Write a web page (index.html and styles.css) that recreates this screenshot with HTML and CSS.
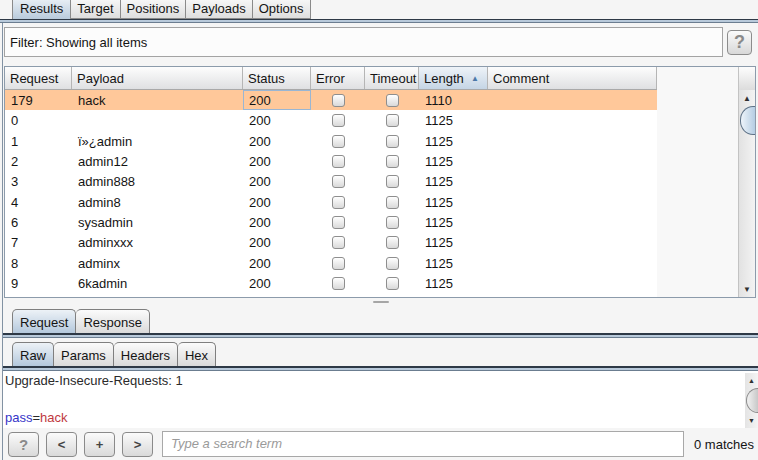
FILE: index.html
```html
<!doctype html>
<html lang="en">
 <head>
  <meta charset="UTF-8">
  <title>Intruder attack - Results</title>
  <link rel="stylesheet" href="styles.css">
 </head>
 <body>

	<!-- top tabs -->
	<div class="maintabs">
		<div class="tab sel">Results</div>
		<div class="tab">Target</div>
		<div class="tab">Positions</div>
		<div class="tab">Payloads</div>
		<div class="tab">Options</div>
	</div>
	<div class="tabline thin"></div>

	<div class="pane">

		<!-- filter -->
		<div class="filter-row">
			<div class="filter">Filter: Showing all items</div>
			<div class="help">?</div>
		</div>

		<!-- results table -->
		<div class="table">
			<div class="grid">
				<div class="thead">
					<div class="th c1">Request</div>
					<div class="th c2">Payload</div>
					<div class="th c3">Status</div>
					<div class="th c4">Error</div>
					<div class="th c5">Timeout</div>
					<div class="th c6 sorted">Length <span class="arrow">&#9650;</span></div>
					<div class="th c7">Comment</div>
				</div>
				<div class="tbody">
					<div class="tr sel"><div class="td c1">179</div><div class="td c2">hack</div><div class="td c3 focus">200</div><div class="td c4"><span class="cb"></span></div><div class="td c5"><span class="cb"></span></div><div class="td c6">1110</div><div class="td c7"></div></div>
					<div class="tr"><div class="td c1">0</div><div class="td c2"></div><div class="td c3">200</div><div class="td c4"><span class="cb"></span></div><div class="td c5"><span class="cb"></span></div><div class="td c6">1125</div><div class="td c7"></div></div>
					<div class="tr"><div class="td c1">1</div><div class="td c2">ï»¿admin</div><div class="td c3">200</div><div class="td c4"><span class="cb"></span></div><div class="td c5"><span class="cb"></span></div><div class="td c6">1125</div><div class="td c7"></div></div>
					<div class="tr"><div class="td c1">2</div><div class="td c2">admin12</div><div class="td c3">200</div><div class="td c4"><span class="cb"></span></div><div class="td c5"><span class="cb"></span></div><div class="td c6">1125</div><div class="td c7"></div></div>
					<div class="tr"><div class="td c1">3</div><div class="td c2">admin888</div><div class="td c3">200</div><div class="td c4"><span class="cb"></span></div><div class="td c5"><span class="cb"></span></div><div class="td c6">1125</div><div class="td c7"></div></div>
					<div class="tr"><div class="td c1">4</div><div class="td c2">admin8</div><div class="td c3">200</div><div class="td c4"><span class="cb"></span></div><div class="td c5"><span class="cb"></span></div><div class="td c6">1125</div><div class="td c7"></div></div>
					<div class="tr"><div class="td c1">6</div><div class="td c2">sysadmin</div><div class="td c3">200</div><div class="td c4"><span class="cb"></span></div><div class="td c5"><span class="cb"></span></div><div class="td c6">1125</div><div class="td c7"></div></div>
					<div class="tr"><div class="td c1">7</div><div class="td c2">adminxxx</div><div class="td c3">200</div><div class="td c4"><span class="cb"></span></div><div class="td c5"><span class="cb"></span></div><div class="td c6">1125</div><div class="td c7"></div></div>
					<div class="tr"><div class="td c1">8</div><div class="td c2">adminx</div><div class="td c3">200</div><div class="td c4"><span class="cb"></span></div><div class="td c5"><span class="cb"></span></div><div class="td c6">1125</div><div class="td c7"></div></div>
					<div class="tr"><div class="td c1">9</div><div class="td c2">6kadmin</div><div class="td c3">200</div><div class="td c4"><span class="cb"></span></div><div class="td c5"><span class="cb"></span></div><div class="td c6">1125</div><div class="td c7"></div></div>
					<div class="tr"><div class="td c1"></div><div class="td c2"></div><div class="td c3"></div><div class="td c4"></div><div class="td c5"></div><div class="td c6"></div><div class="td c7"></div></div>
				</div>
			</div>
			<div class="vscroll">
				<div class="corner"></div>
				<div class="sb-btn">&#9650;</div>
				<div class="sb-track"><div class="sb-thumb"></div></div>
				<div class="sb-btn">&#9660;</div>
			</div>
		</div>

		<!-- splitter -->
		<div class="splitter"><span class="grip"></span></div>

		<!-- request / response -->
		<div class="subtabs">
			<div class="stab sel">Request</div>
			<div class="stab">Response</div>
		</div>
		<div class="tabline"></div>

		<div class="subtabs second">
			<div class="stab sel">Raw</div>
			<div class="stab">Params</div>
			<div class="stab">Headers</div>
			<div class="stab">Hex</div>
		</div>
		<div class="tabline"></div>

		<!-- message editor -->
		<div class="editor">
			<div class="text">
				<div class="line">Upgrade-Insecure-Requests: 1</div>
				<div class="line"></div>
				<div class="line"><span class="pname">pass</span>=<span class="pval">hack</span></div>
			</div>
			<div class="vscroll small">
				<div class="sb-btn">&#9650;</div>
				<div class="sb-track"><div class="sb-thumb"></div></div>
				<div class="sb-btn">&#9660;</div>
			</div>
		</div>

		<!-- search bar -->
		<div class="toolbar">
			<div class="btn q">?</div>
			<div class="btn">&lt;</div>
			<div class="btn">+</div>
			<div class="btn">&gt;</div>
			<div class="search">Type a search term</div>
			<div class="matches">0 matches</div>
		</div>

	</div>

 </body>
</html>
```

FILE: styles.css
```css
	/* base */
	body
	{
		margin:0;
		width:758px;
		height:460px;
		overflow:hidden;
		background-color:#f5f5f5;
		font-family:"Liberation Sans", Arial, sans-serif;
		font-size:13px;
		color:#141414;
	}

	/* top tabs (cut at the top edge) */
	div.maintabs
	{
		display:flex;
		height:19px;
		padding-left:12px;
	}

	div.tab
	{
		padding:0 6px;
		line-height:17px;
		border:1px solid #8a8a8a;
		border-top:none;
		border-left:none;
		background:linear-gradient(#f6f6f6, #dedede);
	}

	div.tab:first-child
	{
		border-left:1px solid #8a8a8a;
	}

	div.tab.sel
	{
		padding:0 7px;
		background:linear-gradient(#e6edf4, #b9cbdc);
		border-bottom:none;
	}

	/* double line under a row of tabs */
	div.tabline
	{
		height:2px;
		border-top:2px solid #2e3946;
		border-bottom:1px solid #6b7d90;
		background-color:#b8c9da;
	}

	div.tabline.thin
	{
		border-top-width:1px;
	}

	/* content pane */
	div.pane
	{
		height:437px;
		margin-left:2px;
		border-left:1px solid #8292a3;
		display:flex;
		flex-direction:column;
	}

	/* filter */
	div.filter-row
	{
		display:flex;
		align-items:center;
		margin-top:4px;
		padding-left:1px;
	}

	div.filter
	{
		width:712px;
		height:28px;
		line-height:29px;
		padding-left:5px;
		border:1px solid #a3a3a3;
		background-color:#fcfcfc;
	}

	div.help
	{
		width:23px;
		height:23px;
		margin-left:4px;
		border:1px solid #8c8c8c;
		border-radius:4px;
		background:linear-gradient(#fbfbfb, #d8d8d8);
		color:#8a8a8a;
		font-weight:bold;
		font-size:18px;
		line-height:23px;
		text-align:center;
	}

	/* results table */
	div.table
	{
		display:flex;
		height:230px;
		margin:9px 2px 0 1px;
		border:1px solid #8c9bab;
		background-color:#f8f8f8;
	}

	div.grid
	{
		flex:1;
		overflow:hidden;
	}

	div.thead
	{
		display:flex;
		height:22px;
		border-bottom:1px solid #a9a9a9;
		width:652px;
	}

	div.th
	{
		box-sizing:border-box;
		padding:1px 0 0 5px;
		line-height:22px;
		border-right:1px solid #b5b5b5;
		background:linear-gradient(#fdfdfd, #dfe0e2);
		white-space:nowrap;
	}

	div.th.sorted
	{
		background:linear-gradient(#eef3f8, #c5d5e5);
		position:relative;
	}

	div.th.sorted span.arrow
	{
		position:absolute;
		right:8px;
		top:1px;
		font-size:8px;
		color:#4b78a8;
	}

	.c1 { width:67px; }
	.c2 { width:171px; }
	.c3 { width:68px; }
	.c4 { width:54px; }
	.c5 { width:54px; }
	.c6 { width:69px; }
	.c7 { width:169px; }

	div.tbody
	{
		width:652px;
	}

	div.tr
	{
		display:flex;
		height:20.33px;
		background-color:#ffffff;
	}

	div.tr.sel
	{
		background-color:#ffc89a;
	}

	div.td
	{
		box-sizing:border-box;
		padding:2px 0 0 6px;
		line-height:18px;
		white-space:nowrap;
		overflow:hidden;
	}

	div.td.focus
	{
		border:1px solid #9ab6d3;
		padding:1px 0 0 5px;
		line-height:18px;
	}

	div.td.c4, div.td.c5
	{
		display:flex;
		align-items:center;
		justify-content:center;
		padding:0;
	}

	span.cb
	{
		width:11px;
		height:11px;
		margin-top:1px;
		border:1px solid #8e8e8e;
		border-radius:3px;
		background:linear-gradient(#ffffff, #d9d9d9);
	}

	/* scrollbars */
	div.vscroll
	{
		width:16px;
		border-left:1px solid #c3c3c3;
		display:flex;
		flex-direction:column;
		background:linear-gradient(to right, #e2e2e2, #f3f3f3);
	}

	div.vscroll div.corner
	{
		height:23px;
		background:linear-gradient(#fdfdfd, #dcdcdc);
	}

	div.sb-btn
	{
		height:16px;
		font-size:8px;
		line-height:18px;
		text-align:center;
		color:#303030;
	}

	div.sb-track
	{
		flex:1;
	}

	div.sb-thumb
	{
		height:27px;
		margin-left:1px;
		border:1px solid #5e7287;
		border-right:none;
		border-radius:13px 0 0 13px / 14px 0 0 14px;
		background:linear-gradient(to right, #eef4fa, #b5cde3);
	}

	/* splitter */
	div.splitter
	{
		height:11px;
		display:flex;
		justify-content:center;
	}

	span.grip
	{
		width:16px;
		height:2px;
		margin-top:3px;
		border-radius:1px;
		background-color:#a6a6a6;
	}

	/* lower tabs */
	div.subtabs
	{
		display:flex;
		height:24px;
		padding-left:9px;
	}

	div.subtabs.second
	{
		margin-top:4px;
	}

	div.stab
	{
		padding:1px 7px 0;
		line-height:23px;
		border:1px solid #7f7f7f;
		border-bottom:none;
		border-left:none;
		border-radius:5px 5px 0 0;
		background:linear-gradient(#fbfbfb, #dadada);
	}

	div.stab:first-child
	{
		border-left:1px solid #7f7f7f;
	}

	div.stab.sel
	{
		background:linear-gradient(#edf2f7, #b4c8dc);
	}

	/* message editor */
	div.editor
	{
		display:flex;
		height:57px;
		background-color:#ffffff;
	}

	div.text
	{
		flex:1;
		padding:1px 0 0 2px;
		color:#2a2a2a;
	}

	div.line
	{
		height:18px;
		line-height:18px;
	}

	div.line:last-child
	{
		padding-top:1px;
	}

	span.pname { color:#3535c8; }
	span.pval { color:#c0393e; }

	div.vscroll.small
	{
		width:13px;
		margin-top:2px;
		border-left:none;
		background:linear-gradient(to right, #e4e4e4, #f4f4f4);
	}

	div.vscroll.small div.sb-btn
	{
		height:15px;
		line-height:15px;
		font-size:7px;
	}

	div.vscroll.small div.sb-thumb
	{
		height:23px;
		border-color:#8a8a8a;
		background:linear-gradient(to right, #f2f2f2, #c8c8c8);
	}

	/* search toolbar */
	div.toolbar
	{
		display:flex;
		align-items:center;
		height:32px;
		padding-left:5px;
	}

	div.btn
	{
		width:29px;
		height:23px;
		margin-right:7px;
		border:1px solid #8a8a8a;
		border-radius:4px;
		background:linear-gradient(#fbfbfb, #d9d9d9);
		text-align:center;
		line-height:23px;
		font-weight:bold;
		font-size:13px;
		color:#444;
	}

	div.btn.q
	{
		color:#8a8a8a;
		font-size:15px;
	}

	div.search
	{
		width:512px;
		height:24px;
		margin-left:2px;
		padding-left:8px;
		border:1px solid #a8a8a8;
		background-color:#ffffff;
		line-height:24px;
		font-style:italic;
		color:#9a9a9a;
	}

	div.matches
	{
		margin-left:10px;
		white-space:nowrap;
	}
```
